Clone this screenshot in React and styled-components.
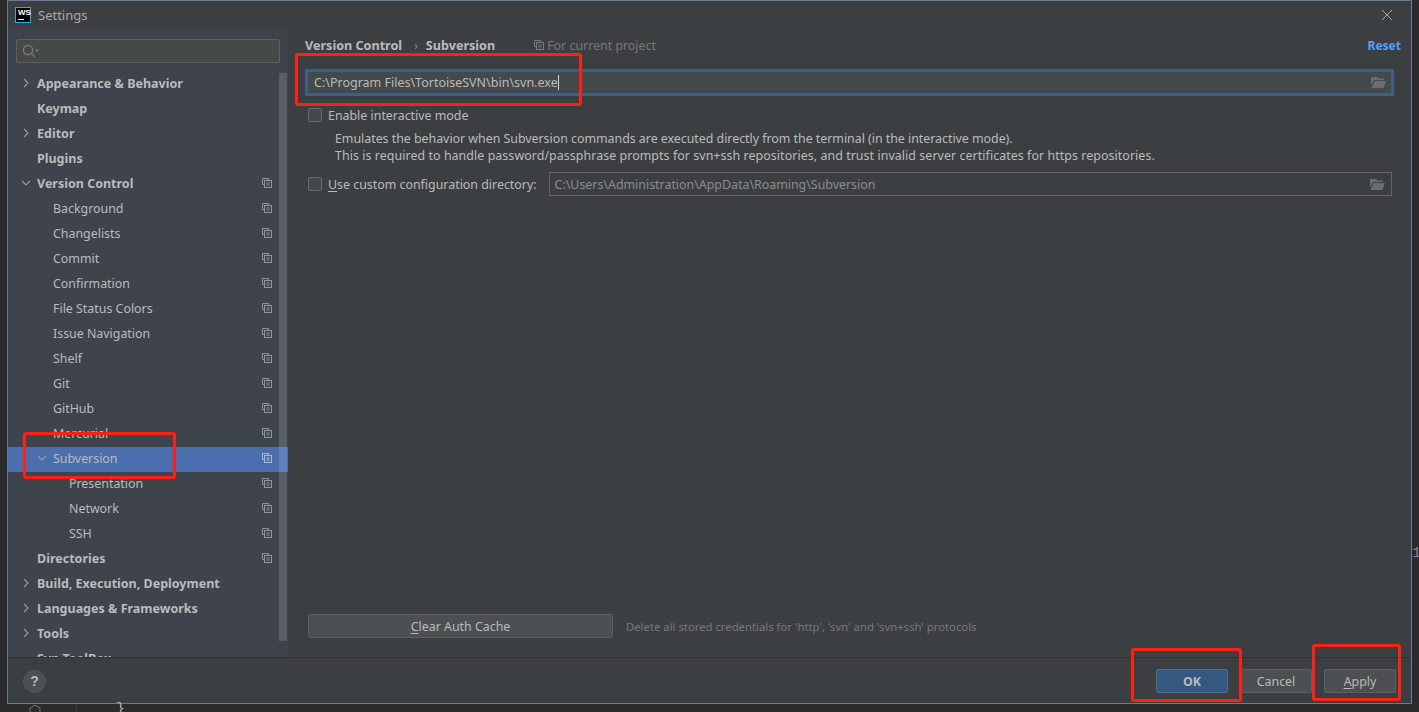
import React from 'react'
import styled, { createGlobalStyle } from 'styled-components'

const Global = createGlobalStyle`
  html, body { margin: 0; padding: 0; background: #2b2b2b; overflow: hidden; }
  body { font-family: "Noto Sans", "Open Sans", sans-serif; font-size: 12.4px; color: #bbbbbb; }
`

const Page = styled.div`
  position: relative;
  width: 1419px;
  height: 712px;
  overflow: hidden;
  background: #2b2b2b;
`
const Win = styled.div`
  width: 1405px;
  height: 704px;
  margin-left: 7px;
  box-sizing: border-box;
  border: 1px solid #6b7a90;
  background: #3c3f41;
  display: flex;
  flex-direction: column;
`
const TitleBar = styled.div`
  height: 28px;
  flex: none;
  display: flex;
  align-items: center;
  padding: 0 18px 0 7px;
  gap: 7px;
  color: #a8a8a8;
  font-size: 13px;
`
const Logo = styled.div`
  width: 16px;
  height: 16px;
  box-sizing: border-box;
  border: 1px solid #18b4e8;
  background: #000;
  color: #fff;
  font: 700 8px/8px "Liberation Sans", sans-serif;
  padding: 1px 0 0 2px;
  position: relative;
  &::after {
    content: '';
    position: absolute;
    left: 2px;
    bottom: 2px;
    width: 6px;
    height: 1px;
    background: #fff;
  }
`
const CloseBtn = styled.svg`
  margin-left: auto;
  width: 12px;
  height: 12px;
`
const Body = styled.div`
  flex: 1;
  min-height: 0;
  display: flex;
`
const Sidebar = styled.div`
  position: relative;
  width: 280px;
  flex: none;
  background: #3e434c;
  overflow: hidden;
  padding-top: 10px;
  box-sizing: border-box;
`
const Search = styled.div`
  width: 264px;
  height: 24px;
  margin-left: 8px;
  box-sizing: border-box;
  border: 1px solid #5e6060;
  border-radius: 2px;
  background: #45494a;
  display: flex;
  align-items: center;
  padding-left: 5px;
`
const Tree = styled.div`
  margin-top: 9px;
`
const Row = styled.div`
  height: 25px;
  display: flex;
  align-items: center;
  padding-left: ${p => p.$indent}px;
  padding-bottom: 3px;
  box-sizing: border-box;
  position: relative;
  font-weight: ${p => (p.$bold ? 700 : 400)};
  font-size: ${p => (p.$bold ? 12.5 : 12.4)}px;
  background: ${p => (p.$selected ? '#4b6eaf' : 'transparent')};
  white-space: nowrap;
`
const Arrow = styled.svg`
  position: absolute;
  left: ${p => p.$left}px;
  top: 6px;
  width: 10px;
  height: 10px;
`
const RowCopy = styled.span`
  position: absolute;
  left: 254px;
  top: 6px;
  display: flex;
`
const Thumb = styled.div`
  position: absolute;
  left: 271px;
  top: 44px;
  width: 8px;
  height: 568px;
  background: rgba(255, 255, 255, 0.14);
`
const Content = styled.div`
  flex: 1;
  min-width: 0;
  display: flex;
  flex-direction: column;
  padding: 6px 9px 19px 17px;
`
const Header = styled.div`
  height: 20px;
  display: flex;
  align-items: center;
  white-space: nowrap;
`
const Crumb = styled.span`
  font-weight: 700;
  font-size: 12.6px;
`
const CrumbSep = styled.span`
  color: #8a8a8a;
  margin: 0 8px 0 12px;
  font-size: 12px;
`
const Scope = styled.span`
  margin-left: 39px;
  color: #787878;
  display: flex;
  align-items: center;
  gap: 3px;
`
const Reset = styled.span`
  margin-left: auto;
  margin-right: 1px;
  color: #589df6;
  font-weight: 700;
  font-size: 12px;
`
const Field = styled.div`
  height: ${p => (p.$focus ? 27 : 24)}px;
  box-sizing: border-box;
  flex: ${p => (p.$grow ? 1 : 'none')};
  border: ${p => (p.$focus ? '3px solid #3d6185' : '1px solid #646464')};
  background: ${p => (p.$focus ? '#45494a' : '#3c3f41')};
  color: ${p => (p.$focus ? '#bbbbbb' : '#8c8c8c')};
  display: flex;
  align-items: center;
  padding: 0 ${p => (p.$focus ? 5 : 6)}px 0 ${p => (p.$focus ? 6 : 5)}px;
  white-space: nowrap;
  font-size: ${p => (p.$focus ? 12.5 : 12.4)}px;
`
const Caret = styled.span`
  width: 1px;
  height: 15px;
  background: #d0d0d0;
`
const Folder = styled.svg`
  margin-left: auto;
  width: 15px;
  height: 13px;
`
const PathField = styled(Field)`
  margin-top: 14px;
  margin-right: 8px;
`
const CheckRow = styled.div`
  display: flex;
  align-items: center;
  height: ${p => p.$h}px;
  margin-top: ${p => p.$top}px;
  margin-left: 3px;
  margin-right: 10px;
`
const Box = styled.span`
  width: 14px;
  height: 14px;
  flex: none;
  box-sizing: border-box;
  border: 1px solid #6b6b6b;
  border-radius: 2px;
  background: #43494a;
  margin-right: 6px;
`
const Under = styled.span`
  text-decoration: underline;
  text-underline-offset: 2px;
`
const Desc = styled.div`
  margin: 6px 0 0 30px;
`
const DescLine = styled.div`
  font-size: 12.4px;
  line-height: 17px;
  white-space: nowrap;
  letter-spacing: ${p => p.$ls}px;
`
const DirLabel = styled.span`
  margin-right: 12px;
  white-space: nowrap;
`
const CacheRow = styled.div`
  margin-top: auto;
  margin-left: 3px;
  display: flex;
  align-items: center;
  gap: 13px;
`
const Btn = styled.div`
  width: ${p => p.$w}px;
  height: 24px;
  box-sizing: border-box;
  border: 1px solid ${p => (p.$primary ? '#4c708c' : '#5e6060')};
  border-radius: 2px;
  background: ${p => (p.$primary ? '#365880' : '#4c5052')};
  font-weight: ${p => (p.$primary ? 700 : 400)};
  display: flex;
  align-items: center;
  justify-content: center;
  flex: none;
`
const Hint = styled.span`
  color: #787878;
  font-size: 11.3px;
  white-space: nowrap;
`
const Footer = styled.div`
  height: 46px;
  flex: none;
  box-sizing: border-box;
  border-top: 1px solid #323232;
  display: flex;
  align-items: center;
  padding: 1px 15px 0 15px;
  gap: 12px;
`
const Help = styled.div`
  width: 23px;
  height: 23px;
  margin-right: auto;
  border-radius: 50%;
  background: #4c5052;
  border: 1px solid #555;
  box-sizing: border-box;
  color: #bbbbbb;
  font: 700 14px/21px "Liberation Sans", sans-serif;
  text-align: center;
`
const Mark = styled.div`
  position: absolute;
  left: ${p => p.$x}px;
  top: ${p => p.$y}px;
  width: ${p => p.$w}px;
  height: ${p => p.$h}px;
  box-sizing: border-box;
  border: 3px solid #ff2015;
  border-radius: 3px;
  pointer-events: none;
`
const Scrap = styled.span`
  position: absolute;
  left: ${p => p.$x}px;
  top: ${p => p.$y}px;
  color: ${p => p.$c};
  font: 15px/14px "Liberation Mono", monospace;
`
const EditorGutter = styled.svg`
  position: absolute;
  left: 28px;
  top: 704px;
  width: 52px;
  height: 8px;
`

const CopyIcon = ({ color = '#8f969c' }) => (
  <svg width="10" height="10" viewBox="0 0 10 10" fill="none" stroke={color} strokeWidth="1">
    <path d="M6.5 2.5V.5H.5v6h2" />
    <rect x="2.5" y="2.5" width="7" height="7" />
    <path d="M4.5 5h3M4.5 7h3" />
  </svg>
)

const SearchIcon = () => (
  <svg width="18" height="14" viewBox="0 0 18 14" fill="none" stroke="#7d7f80" strokeWidth="1.2">
    <circle cx="6" cy="6" r="4.6" />
    <path d="M9.4 9.4l3.4 3.4" />
    <path d="M13 5.5h4l-2 2.3z" fill="#7d7f80" stroke="none" />
  </svg>
)

const FolderIcon = () => (
  <Folder viewBox="0 0 15 13">
    <path d="M0 1h6l1.5 1.5H13V4H3.2L0 9.5z" fill="#6a6e70" />
    <path d="M3.8 5H15l-2.6 7H0.4z" fill="#6a6e70" />
  </Folder>
)

const rows = [
  { t: 'Appearance & Behavior', bold: true, indent: 29, arrow: 'right' },
  { t: 'Keymap', bold: true, indent: 29 },
  { t: 'Editor', bold: true, indent: 29, arrow: 'right' },
  { t: 'Plugins', bold: true, indent: 29 },
  { t: 'Version Control', bold: true, indent: 29, arrow: 'down', copy: true },
  { t: 'Background', indent: 45, copy: true },
  { t: 'Changelists', indent: 45, copy: true },
  { t: 'Commit', indent: 45, copy: true },
  { t: 'Confirmation', indent: 45, copy: true },
  { t: 'File Status Colors', indent: 45, copy: true },
  { t: 'Issue Navigation', indent: 45, copy: true },
  { t: 'Shelf', indent: 45, copy: true },
  { t: 'Git', indent: 45, copy: true },
  { t: 'GitHub', indent: 45, copy: true },
  { t: 'Mercurial', indent: 45, copy: true },
  { t: 'Subversion', indent: 45, arrow: 'down', arrowLeft: 29, copy: true, selected: true },
  { t: 'Presentation', indent: 61, copy: true },
  { t: 'Network', indent: 61, copy: true },
  { t: 'SSH', indent: 61, copy: true },
  { t: 'Directories', bold: true, indent: 29, copy: true },
  { t: 'Build, Execution, Deployment', bold: true, indent: 29, arrow: 'right' },
  { t: 'Languages & Frameworks', bold: true, indent: 29, arrow: 'right' },
  { t: 'Tools', bold: true, indent: 29, arrow: 'right' },
  { t: 'Svn ToolBox', bold: true, indent: 29 },
]

export default function App() {
  return (
    <Page>
      <Global />
      <Win>
        <TitleBar>
          <Logo>WS</Logo>
          Settings
          <CloseBtn viewBox="0 0 12 12" stroke="#a8a8a8" strokeWidth="1" fill="none">
            <path d="M1 1l10 10M11 1L1 11" />
          </CloseBtn>
        </TitleBar>
        <Body>
          <Sidebar>
            <Search><SearchIcon /></Search>
            <Tree>
              {rows.map(r => (
                <Row key={r.t} $indent={r.indent} $bold={r.bold} $selected={r.selected}>
                  {r.arrow && (
                    <Arrow $left={r.arrowLeft || 13} viewBox="0 0 10 10" fill="none" stroke="#9a9da0" strokeWidth="1.1">
                      <path d={r.arrow === 'right' ? 'M3 1l4 4-4 4' : 'M1 3l4 4 4-4'} />
                    </Arrow>
                  )}
                  {r.t}
                  {r.copy && <RowCopy><CopyIcon color={r.selected ? '#a9b7cf' : '#8f969c'} /></RowCopy>}
                </Row>
              ))}
            </Tree>
            <Thumb />
          </Sidebar>
          <Content>
            <Header>
              <Crumb>Version Control</Crumb>
              <CrumbSep>›</CrumbSep>
              <Crumb>Subversion</Crumb>
              <Scope><CopyIcon color="#787878" />For current project</Scope>
              <Reset>Reset</Reset>
            </Header>
            <PathField $focus>
              C:\Program Files\TortoiseSVN\bin\svn.exe<Caret />
              <FolderIcon />
            </PathField>
            <CheckRow $h={18} $top={10}>
              <Box />Enable interactive mode
            </CheckRow>
            <Desc>
              <DescLine $ls={-0.02}>Emulates the behavior when Subversion commands are executed directly from the terminal (in the interactive mode).</DescLine>
              <DescLine $ls={0.07}>This is required to handle password/passphrase prompts for svn+ssh repositories, and trust invalid server certificates for https repositories.</DescLine>
            </Desc>
            <CheckRow $h={24} $top={8}>
              <Box /><DirLabel><Under>U</Under>se custom configuration directory:</DirLabel>
              <Field $grow>
                C:\Users\Administration\AppData\Roaming\Subversion
                <FolderIcon />
              </Field>
            </CheckRow>
            <CacheRow>
              <Btn $w={305}><span><Under>C</Under>lear Auth Cache</span></Btn>
              <Hint>Delete all stored credentials for 'http', 'svn' and 'svn+ssh' protocols</Hint>
            </CacheRow>
          </Content>
        </Body>
        <Footer>
          <Help>?</Help>
          <Btn $w={72} $primary>OK</Btn>
          <Btn $w={72}>Cancel</Btn>
          <Btn $w={72}><span><Under>A</Under>pply</span></Btn>
        </Footer>
      </Win>
      <Mark $x={295} $y={53} $w={287} $h={53} />
      <Mark $x={23} $y={432} $w={153} $h={47} />
      <Mark $x={1131} $y={648} $w={111} $h={54} />
      <Mark $x={1312} $y={644} $w={89} $h={57} />
      <Scrap $x={1412} $y={547} $c="#8a7bb0">1</Scrap>
      <Scrap $x={116} $y={703} $c="#a9b7c6">{'}'}</Scrap>
      <EditorGutter viewBox="0 0 52 8" fill="none" stroke="#6e7173">
        <path d="M2 8V4l5-3 5 3v4" />
        <path d="M48.5 0v8" stroke="#3c3c3c" />
      </EditorGutter>
    </Page>
  )
}
